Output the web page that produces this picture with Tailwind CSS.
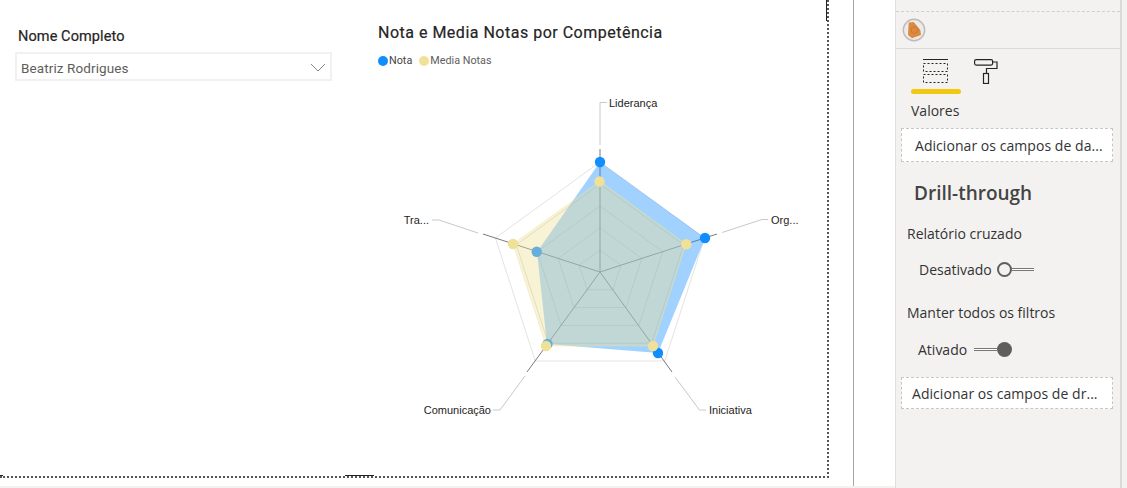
<!DOCTYPE html>
<html lang="en">
<head>
  <meta charset="UTF-8">
  <title>Power BI</title>
  <script src="https://cdn.jsdelivr.net/npm/@tailwindcss/browser@4"></script>
</head>
<body class="bg-white overflow-hidden">
<div class="w-[1127px] h-[488px] flex overflow-hidden">
  <div class="w-[895px] shrink-0 flex flex-col">
    <div class="flex h-[486px]">
      <!-- Canvas -->
      <div class="w-[853px] shrink-0">
        <div class="w-[829px] h-[478px] border-r-2 border-b-2 border-dotted border-[#555] flex relative">
          <!-- Slicer -->
          <div class="w-[378px] shrink-0 pl-[15px] pt-[26px]">
            <div class="pl-[3px] pt-px text-[14.5px] leading-[20px] text-[#252423] font-['Roboto',sans-serif] tracking-[0.1px] [-webkit-text-stroke:0.2px_#252423]">Nome Completo</div>
            <div class="mt-[5px] w-[317px] h-[29px] border-2 border-[#f1f1f1] flex items-center justify-between pl-[4px] pr-[4px]">
              <span class="pt-[3px] text-[13.5px] text-[#605e5c] font-['Roboto',sans-serif] tracking-[0.1px]">Beatriz Rodrigues</span>
              <svg class="mt-[2px]" width="16" height="9" viewBox="0 0 16 9" fill="none" stroke="#7f8a92" stroke-width="1"><path d="M1 1l7 7 7-7"/></svg>
            </div>
          </div>
          <!-- Radar chart -->
          <div class="flex-1 relative">
            <div class="pt-[22px] text-[16px] leading-[22px] text-[#252423] font-['Roboto',sans-serif] tracking-[0.5px] [-webkit-text-stroke:0.2px_#252423]">Nota e Media Notas por Competência</div>
            <div class="mt-[10px] flex items-center h-[14px] text-[10.8px] text-[#605e5c] font-['Roboto',sans-serif]">
              <span class="w-[10px] h-[10px] rounded-full bg-[#118dff]"></span>
              <span class="ml-px text-[#444]">Nota</span>
              <span class="ml-[7px] w-[10px] h-[10px] rounded-full bg-[#f0e199]"></span>
              <span class="ml-px">Media Notas</span>
            </div>
            <svg class="absolute left-0 top-0" width="449" height="475" viewBox="378 0 449 475" font-family="Liberation Sans, Arial, sans-serif" font-size="11" fill="#252423">
              <!-- grid -->
              <g fill="none" stroke="#dcdcdc" stroke-width="1">
                <polygon points="600,162 704.6,238 664.7,361 535.3,361 495.4,238" stroke="#e3e3e3"/>
                <polygon points="600,250 620.9,265.2 612.9,289.8 587.1,289.8 579.1,265.2"/>
                <polygon points="600,228 641.8,258.4 625.9,307.6 574.1,307.6 558.2,258.4"/>
                <polygon points="600,206 662.8,251.6 638.8,325.4 561.2,325.4 537.2,251.6"/>
                <polygon points="600,184 683.7,244.8 651.7,343.2 548.3,343.2 516.3,244.8"/>
              </g>
              <!-- axes -->
              <g stroke="#7a7a7a" stroke-width="1">
                <line x1="600" y1="272" x2="600" y2="149"/>
                <line x1="600" y1="272" x2="717" y2="234"/>
                <line x1="600" y1="272" x2="672" y2="372"/>
                <line x1="600" y1="272" x2="527" y2="372"/>
                <line x1="600" y1="272" x2="483" y2="234"/>
              </g>
              <!-- series fills -->
              <polygon points="600,162 705,238 658,353 547,344 537,252" fill="#118dff" fill-opacity="0.4"/>
              <polygon points="600,181 686,244 653,346 546,346 513,244" fill="#f0e199" fill-opacity="0.4" stroke="#f0e199" stroke-opacity="0.4"/>
              <!-- leaders -->
              <g fill="none" stroke="#c8c8c8" stroke-width="1">
                <polyline points="600,145 600,102.5 607,102.5"/>
                <polyline points="722,232.5 762,219.5 768,219.5"/>
                <polyline points="675,377 699.5,410 706,410"/>
                <polyline points="525,376 500,410 493,410"/>
                <polyline points="478,233 439,220 432,220"/>
              </g>
              <!-- markers -->
              <g fill="#118dff">
                <circle cx="600" cy="162" r="5.2"/>
                <circle cx="705" cy="238" r="5.2"/>
                <circle cx="658" cy="353" r="5.2"/>
                <circle cx="547.5" cy="344" r="5.2" fill="#66afdb"/>
                <circle cx="536.7" cy="251.7" r="5.2" fill="#66afdb"/>
              </g>
              <g fill="#f0e199">
                <circle cx="599.5" cy="181.5" r="5.2"/>
                <circle cx="686.3" cy="244.3" r="5.2"/>
                <circle cx="653" cy="346" r="5.2"/>
                <circle cx="546" cy="346" r="5.2"/>
                <circle cx="513" cy="244" r="5.2"/>
              </g>
              <!-- labels -->
              <text x="609" y="107">Liderança</text>
              <text x="771" y="224">Org...</text>
              <text x="709" y="414">Iniciativa</text>
              <text x="491" y="414" text-anchor="end">Comunicação</text>
              <text x="429" y="224" text-anchor="end">Tra...</text>
            </svg>
          </div>
          <!-- Selection handles -->
          <div class="absolute right-0 top-0 w-px h-[21px] bg-[#222]"></div>
          <div class="absolute left-[345px] bottom-0 w-[29px] h-px bg-[#222]"></div>
          <div class="absolute left-0 bottom-0 w-[3px] h-px bg-[#222]"></div>
        </div>
      </div>
      <div class="flex-1 border-l border-[#a6a6a6]"></div>
    </div>
    <div class="h-[2px] bg-[#f3f2f1]"></div>
  </div>
  <!-- Visualizations pane -->
  <div class="w-[227px] shrink-0 bg-[#f3f2f1] border-l border-r-2 border-l-[#e1dfdd] border-r-[#dcdad8] font-['Open_Sans',sans-serif] text-[#333] text-[14px]">
    <div class="h-[12px] border-b border-dashed border-[#d2d0ce]"></div>
    <div class="h-[37px] border-b border-[#dadada] flex items-center pl-[6px]">
      <svg width="24" height="24" viewBox="0 0 24 24">
        <circle cx="12" cy="12" r="10.7" fill="#ecebea" stroke="#bdbbb9" stroke-width="1.4"/>
        <polygon points="6.7,4.6 11.7,3.9 18.3,12 19,17 10,20.3 6,17" fill="#dd8a3f"/>
        <circle cx="12.3" cy="12" r="3.4" fill="none" stroke="#c47b3a"/>
      </svg>
    </div>
    <div class="flex pl-[15px]">
      <div class="w-[50px] shrink-0">
        <svg class="mt-[10px] ml-[12px]" width="26" height="25" viewBox="0 0 26 25" fill="none" stroke="#252423">
          <path d="M0 .5h25"/>
          <rect x=".5" y="4.5" width="24" height="8" stroke-dasharray="2 2"/>
          <rect x=".5" y="15.5" width="24" height="8" stroke-dasharray="2 2"/>
        </svg>
        <div class="mt-[5px] h-[5px] rounded-full bg-[#f2c811]"></div>
      </div>
      <svg class="ml-[13px] mt-[10px]" width="24" height="25" viewBox="0 0 24 25" fill="none" stroke="#252423" stroke-width="1.2">
        <rect x=".6" y=".6" width="18" height="5.5" rx="1.5"/>
        <path d="M19 3h4v6.5H12.5v5"/>
        <rect x="9.5" y="14.5" width="5" height="10"/>
      </svg>
    </div>
    <div class="pl-[15px] mt-[7px] leading-[20px]">Valores</div>
    <div class="ml-[5px] mt-[7px] w-[212px] h-[34px] bg-white border border-dashed border-[#c8c6c4] flex items-center pl-[13px] whitespace-nowrap tracking-[0.05px]">Adicionar os campos de da...</div>
    <div class="pl-[18px] mt-[17px] leading-[28px] text-[19px] font-semibold text-[#444]">Drill-through</div>
    <div class="pl-[11px] mt-[17px] leading-[20px]">Relatório cruzado</div>
    <div class="pl-[23px] mt-[15px] h-[20px] flex items-center">
      <span>Desativado</span>
      <span class="ml-[5px] w-[15px] h-[15px] rounded-full border-2 border-[#605e5c] shrink-0"></span>
      <span class="w-[22px] h-[3px] border-y border-[#777] bg-white"></span>
    </div>
    <div class="pl-[11px] mt-[24px] leading-[20px]">Manter todos os filtros</div>
    <div class="pl-[22px] mt-[16px] h-[20px] flex items-center">
      <span>Ativado</span>
      <span class="ml-[7px] w-[23px] h-[3px] border-y border-[#777] bg-white"></span>
      <span class="w-[15px] h-[15px] rounded-full bg-[#605e5c] shrink-0"></span>
    </div>
    <div class="ml-[5px] mt-[18px] w-[212px] h-[32px] bg-white border border-dashed border-[#c8c6c4] flex items-center pl-[10px] whitespace-nowrap tracking-[0.05px]">Adicionar os campos de dr...</div>
  </div>
  <div class="flex-1 bg-[#f3f2f1]"></div>
</div>
</body>
</html>
